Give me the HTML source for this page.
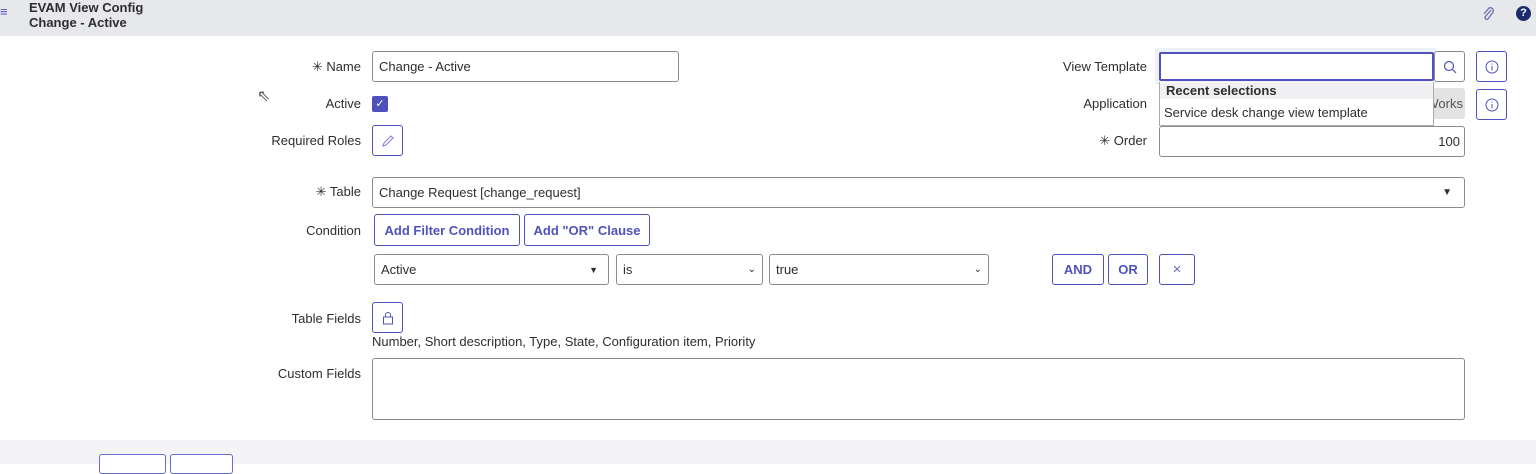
<!DOCTYPE html><html><head><style>
*{box-sizing:border-box}body{margin:0;width:1536px;height:464px;overflow:hidden;background:#fff;font-family:"Liberation Sans",sans-serif;font-size:13px;color:#2e2e2e;position:relative}
.a{position:absolute}
.lbl{position:absolute;text-align:right;line-height:16px}
.in{position:absolute;border:1px solid #8c8c8c;border-radius:3px;background:#fff;padding-left:6px;display:flex;align-items:center}
.btn{position:absolute;border:1px solid #4f52bd;border-radius:3px;background:#fff;color:#4f52bd;font-weight:bold;display:flex;align-items:center;justify-content:center}
</style></head><body>
<div class="a" style="left:0;top:0;width:1536px;height:36px;background:#e7e8eb"></div>
<div class="a" style="left:0;top:4px;color:#4f52bd;font-size:13px">≡</div>
<div class="a" style="left:29px;top:0;font-weight:bold;font-size:13px;line-height:15px">EVAM View Config<br>Change - Active</div>
<svg class="a" style="left:1481px;top:6px" width="14" height="16" viewBox="0 0 14 16"><path d="M10 4 L4 11 a2 2 0 0 0 3 2 L12 6 a3 3 0 0 0 -4 -4 L3 8" fill="none" stroke="#6a6cb8" stroke-width="1.3"/></svg>
<div class="a" style="left:1516px;top:6px;width:15px;height:15px;border-radius:50%;background:#1d2a6b;color:#fff;font-weight:bold;font-size:11px;text-align:center;line-height:15px">?</div>

<div class="lbl" style="right:1175px;top:59px">✳ Name</div>
<div class="in" style="left:372px;top:51px;width:307px;height:31px">Change - Active</div>
<div class="lbl" style="right:1175px;top:96px">Active</div>
<div class="a" style="left:372px;top:96px;width:16px;height:16px;background:#4f52bd;border-radius:2px;color:#fff;font-size:11px;text-align:center;line-height:16px">✓</div>
<div class="a" style="left:257px;top:86px;font-size:16px;color:#555">⇖</div>
<div class="lbl" style="right:1175px;top:133px">Required Roles</div>
<div class="btn" style="left:372px;top:125px;width:31px;height:31px"><svg width="14" height="14" viewBox="0 0 14 14"><path d="M2 12 L3 9 L10 2 L12 4 L5 11 Z" fill="none" stroke="#8a7fd0" stroke-width="1.1"/></svg></div>
<div class="lbl" style="right:1175px;top:184px">✳ Table</div>
<div class="in" style="left:372px;top:177px;width:1093px;height:31px">Change Request [change_request]<span class="a" style="right:12px;font-size:10px">▼</span></div>
<div class="lbl" style="right:1175px;top:223px">Condition</div>
<div class="btn" style="left:374px;top:214px;width:146px;height:32px">Add Filter Condition</div>
<div class="btn" style="left:524px;top:214px;width:126px;height:32px">Add "OR" Clause</div>
<div class="in" style="left:374px;top:254px;width:235px;height:31px">Active<span class="a" style="right:10px;font-size:9px">▼</span></div>
<div class="in" style="left:616px;top:254px;width:147px;height:31px">is<span class="a" style="right:6px;font-size:10px">⌄</span></div>
<div class="in" style="left:769px;top:254px;width:220px;height:31px">true<span class="a" style="right:6px;font-size:10px">⌄</span></div>
<div class="btn" style="left:1052px;top:254px;width:52px;height:31px">AND</div>
<div class="btn" style="left:1108px;top:254px;width:40px;height:31px">OR</div>
<div class="btn" style="left:1159px;top:254px;width:36px;height:31px;font-weight:normal;font-size:15px;color:#6a6cb8">×</div>
<div class="lbl" style="right:1175px;top:311px">Table Fields</div>
<div class="btn" style="left:372px;top:302px;width:31px;height:31px"><svg width="12" height="14" viewBox="0 0 12 14"><rect x="1.5" y="6" width="9" height="7" fill="none" stroke="#4f52bd"/><path d="M3.5 6 V4 a2.5 2.5 0 0 1 5 0 V6" fill="none" stroke="#4f52bd"/></svg></div>
<div class="a" style="left:372px;top:334px;line-height:16px">Number, Short description, Type, State, Configuration item, Priority</div>
<div class="lbl" style="right:1175px;top:366px">Custom Fields</div>
<div class="in" style="left:372px;top:358px;width:1093px;height:62px"></div>

<div class="lbl" style="right:389px;top:59px">View Template</div>
<div class="a" style="left:1155px;top:48px;width:282px;height:36px;background:#eef0fa"></div>
<div class="a" style="left:1159px;top:52px;width:275px;height:29px;border:2px solid #4f52bd;border-radius:2px;background:#fff"></div>
<div class="in" style="left:1434px;top:51px;width:31px;height:31px;padding:0;justify-content:center"><svg width="14" height="14"><circle cx="6" cy="6" r="4.5" fill="none" stroke="#4f52bd" stroke-width="1.2"/><path d="M9.5 9.5 L13 13" stroke="#4f52bd" stroke-width="1.2"/></svg></div>
<div class="btn" style="left:1476px;top:51px;width:31px;height:31px"><svg width="14" height="14"><circle cx="7" cy="7" r="6" fill="none" stroke="#4f52bd"/><path d="M7 6 V10.5 M7 3.5 V4.6" stroke="#4f52bd"/></svg></div>
<div class="lbl" style="right:389px;top:96px">Application</div>
<div class="a" style="left:1159px;top:88px;width:306px;height:31px;background:#e3e3e3;border-radius:3px;text-align:right;padding:8px 2px 0 0;color:#555;overflow:hidden">Works</div>
<div class="btn" style="left:1476px;top:89px;width:31px;height:31px"><svg width="14" height="14"><circle cx="7" cy="7" r="6" fill="none" stroke="#4f52bd"/><path d="M7 6 V10.5 M7 3.5 V4.6" stroke="#4f52bd"/></svg></div>
<div class="a" style="left:1159px;top:82px;width:275px;height:44px;background:#fff;border:1px solid #aaa;border-top:none"></div>
<div class="a" style="left:1160px;top:83px;width:273px;height:16px;background:#f0f0f2;font-weight:bold;padding-left:6px;line-height:16px">Recent selections</div>
<div class="a" style="left:1164px;top:105px;line-height:16px">Service desk change view template</div>
<div class="lbl" style="right:389px;top:133px">✳ Order</div>
<div class="in" style="left:1159px;top:126px;width:306px;height:31px;justify-content:flex-end;padding-right:4px">100</div>

<div class="a" style="left:0;top:440px;width:1536px;height:24px;background:#f4f4f6"></div>
<div class="a" style="left:99px;top:454px;width:67px;height:20px;border:1px solid #6a6cd0;border-radius:3px;background:#fff"></div>
<div class="a" style="left:170px;top:454px;width:63px;height:20px;border:1px solid #6a6cd0;border-radius:3px;background:#fff"></div>
</body></html>
